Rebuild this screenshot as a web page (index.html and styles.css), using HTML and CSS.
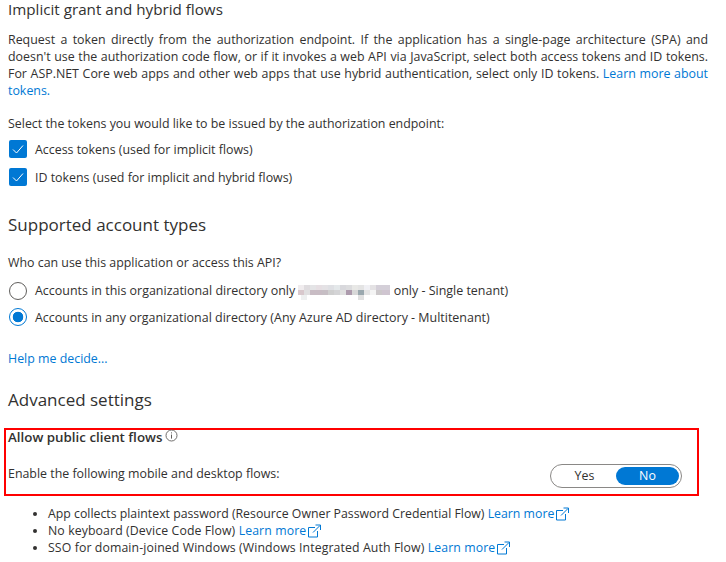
FILE: index.html
```html
<!DOCTYPE html>
<html lang="en">
<head>
    <meta charset="UTF-8">
    <meta name="viewport" content="width=device-width, initial-scale=1.0">
    <title>Authentication settings</title>
    <link rel="stylesheet" href="styles.css">
</head>
<body>
    <h2 class="heading-small">Implicit grant and hybrid flows</h2>
    <p class="intro">Request a token directly from the authorization endpoint. If the application has a single-page architecture (SPA) and doesn't use the authorization code flow, or if it invokes a web API via JavaScript, select both access tokens and ID tokens. For ASP.NET Core web apps and other web apps that use hybrid authentication, select only ID tokens. <a href="#">Learn more about tokens.</a></p>
    <p class="prompt">Select the tokens you would like to be issued by the authorization endpoint:</p>

    <div class="option-group check-group">
        <div class="option">
            <span class="checkbox">
                <svg width="18" height="18" viewBox="0 0 18 18"><path d="M4 9.500l3.500 3.500L14 5.500" fill="none" stroke="#fff" stroke-width="1"/></svg>
            </span>
            Access tokens (used for implicit flows)
        </div>
        <div class="option">
            <span class="checkbox">
                <svg width="18" height="18" viewBox="0 0 18 18"><path d="M4 9.500l3.500 3.500L14 5.500" fill="none" stroke="#fff" stroke-width="1"/></svg>
            </span>
            ID tokens (used for implicit and hybrid flows)
        </div>
    </div>

    <h2 class="heading">Supported account types</h2>
    <p class="prompt-tight">Who can use this application or access this API?</p>

    <div class="option-group radio-group">
        <div class="option">
            <span class="radio"></span>
            <span>Accounts in this organizational directory only <span class="redacted"></span> only - Single tenant)</span>
        </div>
        <div class="option">
            <span class="radio radio-on"></span>
            Accounts in any organizational directory (Any Azure AD directory - Multitenant)
        </div>
    </div>

    <p class="help"><a href="#">Help me decide...</a></p>

    <h2 class="heading heading-advanced">Advanced settings</h2>

    <div class="highlight">
        <div class="flow-title">
            <strong>Allow public client flows</strong>
            <svg class="info" width="13" height="13" viewBox="0 0 13 13">
                <circle cx="6.500" cy="6.500" r="5.500" fill="none" stroke="#605e5c" stroke-width="0.9"/>
                <path d="M6.500 5.600v4M6.500 3.400v1" fill="none" stroke="#605e5c" stroke-width="1"/>
            </svg>
        </div>
        <div class="flow-row">
            <span class="flow-label">Enable the following mobile and desktop flows:</span>
            <div class="toggle">
                <span class="toggle-item">Yes</span>
                <span class="toggle-item toggle-active">No</span>
            </div>
        </div>
    </div>

    <ul class="flows">
        <li>App collects plaintext password (Resource Owner Password Credential Flow) <a href="#">Learn more<svg class="ext" width="14" height="14" viewBox="0 0 14 14"><path d="M8 3.500H1.500v9.500h9V7M6 8.500L13 1.500M8.500 1H13.500V6" fill="none" stroke="#0078d4" stroke-width="1"/></svg></a></li>
        <li class="flow-wide">No keyboard (Device Code Flow) <a href="#">Learn more<svg class="ext" width="14" height="14" viewBox="0 0 14 14"><path d="M8 3.500H1.500v9.500h9V7M6 8.500L13 1.500M8.500 1H13.500V6" fill="none" stroke="#0078d4" stroke-width="1"/></svg></a></li>
        <li class="flow-wide">SSO for domain-joined Windows (Windows Integrated Auth Flow) <a href="#">Learn more<svg class="ext" width="14" height="14" viewBox="0 0 14 14"><path d="M8 3.500H1.500v9.500h9V7M6 8.500L13 1.500M8.500 1H13.500V6" fill="none" stroke="#0078d4" stroke-width="1"/></svg></a></li>
    </ul>
</body>
</html>
```

FILE: styles.css
```css
body {
    font-family: "Open Sans", "Noto Sans", sans-serif;
    font-size: 12.4px;
    line-height: 17px;
    color: #323130;
    background: #ffffff;
    margin: 0;
    padding: 0 18px 0 8px;
    height: 562px;
    overflow: hidden;
    box-sizing: border-box;
}

a {
    color: #0078d4;
    text-decoration: none;
}

h2, p, ul {
    margin: 0;
    font-weight: 400;
}

.heading-small {
    font-size: 15.2px;
    line-height: 18px;
}

.heading {
    font-size: 17px;
    line-height: 24px;
    margin-top: 27px;
}

.heading-advanced {
    margin-top: 21px;
}

.intro {
    margin-top: 13px;
    text-align: justify;
}

.prompt {
    margin-top: 16px;
}

.prompt-tight {
    margin-top: 17px;
}

.option-group {
    display: flex;
    flex-direction: column;
    margin-left: 1px;
}

.check-group {
    margin-top: 8px;
    gap: 10px;
}

.radio-group {
    margin-top: 11px;
    gap: 8px;
    font-size: 12.46px;
}

.option {
    display: flex;
    align-items: center;
    gap: 8px;
    height: 18px;
}

.checkbox {
    width: 18px;
    height: 18px;
    background: #0078d4;
    border-radius: 2px;
    flex-shrink: 0;
}

.checkbox svg {
    display: block;
}

.radio {
    width: 18px;
    height: 18px;
    border: 1px solid #605e5c;
    border-radius: 50%;
    box-sizing: border-box;
    flex-shrink: 0;
    background: #ffffff;
}

.radio-on {
    border-color: #0078d4;
    background: radial-gradient(circle, #0078d4 0, #0078d4 5px, #ffffff 5.6px);
}

/* pixelated name: three rows of 6px blocks */
.redacted {
    display: inline-block;
    width: 92px;
    height: 15px;
    vertical-align: -5px;
    background-repeat: no-repeat;
    background-size: 92px 5px, 92px 5px, 92px 5px;
    background-position: 0 0, 0 5px, 0 10px;
    background-image:
        linear-gradient(90deg, #f0ecee 0 6px, #dfdcdf 6px 12px, #e4e4e6 12px 18px, #e6dfe3 18px 24px, #e4e2e5 24px 30px, #dfe0e4 30px 36px, #e4e8ea 36px 42px, #d8d8dc 42px 48px, #dcdcde 48px 54px, #e8e8e6 54px 60px, #e4e4e4 60px 66px, #f0f0f4 66px 72px, #e4e2e4 72px 78px, #d4cfd8 78px 92px),
        linear-gradient(90deg, #d8c8cc 0 6px, #e0dfe0 6px 12px, #c8bcc4 12px 24px, #c6bec4 24px 30px, #cfcfcf 30px 36px, #d4d4d6 36px 42px, #e0e0e0 42px 48px, #ad9bad 48px 54px, #d8d8d8 54px 60px, #9aa8ae 60px 66px, #e4e4e4 66px 72px, #f4f4f4 72px 78px, #ccc8ca 78px 84px, #cfc5d0 84px 92px),
        linear-gradient(90deg, #ffffff 0 3px, #eef0f0 3px 9px, #ffffff 9px 60px, #e0e0e0 60px 66px, #ffffff 66px 92px);
}

.help {
    margin-top: 24px;
}

.highlight {
    border: 2px solid #ff0000;
    height: 68px;
    width: 695px;
    box-sizing: border-box;
    margin: 16px 0 0 -4px;
    padding: 0 15px 6px 2px;
    display: flex;
    flex-direction: column;
    justify-content: space-between;
}

.flow-title {
    display: flex;
    align-items: flex-start;
    gap: 3px;
    margin-top: -1px;
}

.flow-title strong {
    font-size: 13.35px;
    font-weight: 600;
}

.flow-row {
    display: flex;
    justify-content: space-between;
    align-items: flex-start;
}

.flow-label {
    margin-top: 1px;
}

.toggle {
    display: flex;
    align-items: center;
    width: 132px;
    height: 24px;
    box-sizing: border-box;
    border: 1px solid #8a8886;
    border-radius: 12px;
    padding: 2px;
}

.toggle-item {
    flex: 1;
    text-align: center;
    line-height: 18px;
    border-radius: 9px;
}

.toggle-active {
    background: #0078d4;
    color: #ffffff;
}

.flows {
    margin-top: 9px;
    padding-left: 40px;
    font-size: 12.3px;
}

.flow-wide {
    letter-spacing: 0.1px;
}

.ext {
    vertical-align: -3px;
    margin-left: 1px;
}
```
